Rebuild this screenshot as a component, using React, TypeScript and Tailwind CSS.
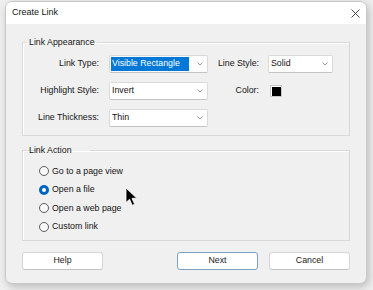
function Chevron() {
  return (
    <svg width="6" height="4" viewBox="0 0 6 4" className="shrink-0">
      <path d="M0.5 0.5 L3 3 L5.5 0.5" fill="none" stroke="#8a8a8a" strokeWidth="0.9" />
    </svg>
  );
}

function Combo({ value, width, selected }: { value: string; width: string; selected?: boolean }) {
  return (
    <div className={`${width} h-[18px] bg-white border border-[#dadada] border-b-[#c4c4c4] rounded-[2px] flex items-center p-[1px]`}>
      {selected ? (
        <div className="flex-1 h-full bg-[#0078d7] text-white flex items-center pl-[1px] mr-[8px]">{value}</div>
      ) : (
        <div className="flex-1 pl-[1px]">{value}</div>
      )}
      <div className="pr-[3px]">
        <Chevron />
      </div>
    </div>
  );
}

function Radio({ label, checked }: { label: string; checked?: boolean }) {
  return (
    <div className="h-[18.5px] flex items-center gap-[3px]">
      {checked ? (
        <span className="w-[10px] h-[10px] rounded-full bg-[#0067c0] flex items-center justify-center">
          <span className="w-[4px] h-[4px] rounded-full bg-white" />
        </span>
      ) : (
        <span className="w-[10px] h-[10px] rounded-full border border-[#5c5c5c] bg-[#f7f7f7]" />
      )}
      <span>{label}</span>
    </div>
  );
}

function Button({ label, primary }: { label: string; primary?: boolean }) {
  return (
    <button
      className={`w-[81px] h-[18px] bg-white rounded-[3px] border ${
        primary ? "border-[#7c9fc4] bg-[#fdfdfd]" : "border-[#d6d6d6] border-b-[#c2c2c2]"
      } text-[#1a1a1a]`}
    >
      {label}
    </button>
  );
}

export default function App() {
  return (
    <div
      className="w-[373px] h-[290px] bg-[#efefef] pl-[5px] pt-[1px] text-[8.8px] text-[#141414] relative"
      style={{ fontFamily: '"Liberation Sans", Arial, sans-serif' }}
    >
      {/* Dialog window */}
      <div className="w-[362px] h-[283px] rounded-[7px] border border-[#c9c9c9] bg-[#f0f0f0] overflow-hidden shadow-[2px_3px_8px_rgba(0,0,0,0.22)]">
        {/* Title bar */}
        <div className="h-[22px] bg-white flex items-center justify-between pl-[6px] pr-[6px]">
          <span className="text-[9px]">Create Link</span>
          <svg width="9" height="9" viewBox="0 0 9 9">
            <path d="M0.5 0.5 L8.5 8.5 M8.5 0.5 L0.5 8.5" stroke="#333" strokeWidth="0.9" />
          </svg>
        </div>

        <div className="px-[16px] pt-[12px]">
          {/* Link Appearance */}
          <fieldset className="border border-[#d9d9d9] shadow-[inset_1px_1px_0_#ffffff] pl-[0px] pb-[8px]">
            <legend className="ml-[4px] px-[2px] leading-[12px]">Link Appearance</legend>
            <div className="flex flex-col gap-[9px] pt-[7px]">
              <div className="flex items-center">
                <span className="w-[76px] text-right">Link Type:</span>
                <div className="ml-[10px]">
                  <Combo value="Visible Rectangle" width="w-[99px]" selected />
                </div>
                <span className="w-[51px] text-right">Line Style:</span>
                <div className="ml-[9px]">
                  <Combo value="Solid" width="w-[65px]" />
                </div>
              </div>
              <div className="flex items-center">
                <span className="w-[76px] text-right">Highlight Style:</span>
                <div className="ml-[10px]">
                  <Combo value="Invert" width="w-[99px]" />
                </div>
                <span className="w-[51px] text-right">Color:</span>
                <span className="ml-[11px] w-[12px] h-[12px] border border-[#c8c8c8] bg-white flex items-center justify-center">
                  <span className="w-[9px] h-[9px] bg-black" />
                </span>
              </div>
              <div className="flex items-center">
                <span className="w-[76px] text-right">Line Thickness:</span>
                <div className="ml-[10px]">
                  <Combo value="Thin" width="w-[99px]" />
                </div>
              </div>
            </div>
          </fieldset>

          {/* Link Action */}
          <fieldset className="mt-[8px] border border-[#d9d9d9] shadow-[inset_1px_1px_0_#ffffff] pl-[16px] pb-[4px]">
            <legend className="ml-[4px] px-[2px] leading-[12px] -translate-x-[16px]">Link Action</legend>
            <div className="flex flex-col pt-[6px]">
              <Radio label="Go to a page view" />
              <Radio label="Open a file" checked />
              <Radio label="Open a web page" />
              <Radio label="Custom link" />
            </div>
          </fieldset>

          {/* Buttons */}
          <div className="mt-[11px] flex items-center">
            <Button label="Help" />
            <div className="ml-auto flex gap-[11px]">
              <Button label="Next" primary />
              <Button label="Cancel" />
            </div>
          </div>
        </div>
      </div>

      {/* Mouse cursor */}
      <svg className="absolute left-[125px] top-[187px]" width="13" height="20" viewBox="0 0 13 20">
        <path d="M1 1 L1 15.5 L4.6 12.2 L7.2 18.3 L9.6 17.3 L7 11.3 L11.8 11.3 Z" fill="#000" stroke="#fff" strokeWidth="0.8" />
      </svg>
    </div>
  );
}
